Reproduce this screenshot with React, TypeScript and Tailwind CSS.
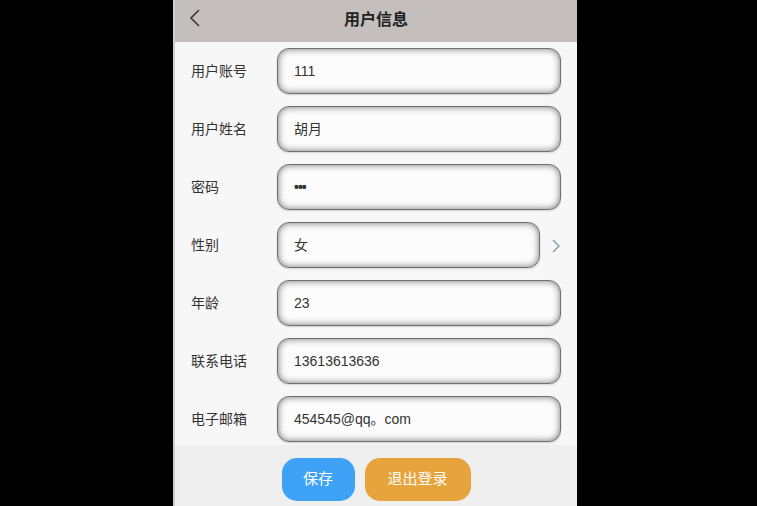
import React from "react";

const FONT = "font-['Liberation_Sans','Noto_Sans_CJK_SC',sans-serif]";

type Field = { label: string; value: string; select?: boolean; dots?: boolean };

const fields: Field[] = [
  { label: "用户账号", value: "111" },
  { label: "用户姓名", value: "胡月" },
  { label: "密码", value: "•••", dots: true },
  { label: "性别", value: "女", select: true },
  { label: "年龄", value: "23" },
  { label: "联系电话", value: "13613613636" },
  { label: "电子邮箱", value: "454545@qq。com" },
];

const Row = ({ field }: { field: Field }) => (
  <div className="flex items-center h-[46px]">
    <div className="w-[86px] text-[14px] text-[#333]">{field.label}</div>
    <div
      className={`h-[46px] flex items-center pl-[16px] rounded-[12px] border border-[#6f6f6f] bg-[#fcfcfc] shadow-[inset_0_0_7px_rgba(0,0,0,0.55),0_1px_2px_rgba(0,0,0,0.15)] text-[14px] text-[#333] ${
        field.select ? "w-[263px]" : "w-[284px]"
      } ${field.dots ? "font-bold tracking-[-1px]" : ""}`}
    >
      {field.value}
    </div>
    {field.select && (
      <svg width="10" height="16" viewBox="0 0 10 16" className="ml-[11px] mt-[1px]">
        <polyline points="2,2 8,8 2,14" fill="none" stroke="#8fa5ad" strokeWidth="1.6" />
      </svg>
    )}
  </div>
);

export default function App() {
  return (
    <div className={`w-full h-[506px] bg-black flex ${FONT}`}>
      <div className="ml-[173px] w-[404px] h-[506px] flex flex-col border-l-2 border-[#cfcfcf] bg-[#f7f7f7]">
        <header className="h-[42px] bg-[#c4bfbc] flex items-center relative shrink-0">
          <svg width="12" height="20" viewBox="0 0 12 20" className="ml-[14px] -mt-[6px]">
            <polyline points="10,2 2,10 10,18" fill="none" stroke="#333" strokeWidth="1.6" />
          </svg>
          <div className="absolute inset-x-0 top-[8px] text-center text-[16px] font-bold text-[#222]">用户信息</div>
        </header>
        <main className="flex flex-col gap-[12px] pt-[6px] pl-[16px]">
          {fields.map((f) => (
            <Row key={f.label} field={f} />
          ))}
        </main>
        <footer className="mt-[3px] flex-1 bg-[#efefef] flex justify-center gap-[10px] pt-[13px]">
          <button className="w-[73px] h-[43px] rounded-[15px] bg-[#3ea2f7] text-white text-[15px]">保存</button>
          <button className="w-[106px] h-[43px] rounded-[15px] bg-[#e8a43c] text-white text-[15px]">退出登录</button>
        </footer>
      </div>
    </div>
  );
}
